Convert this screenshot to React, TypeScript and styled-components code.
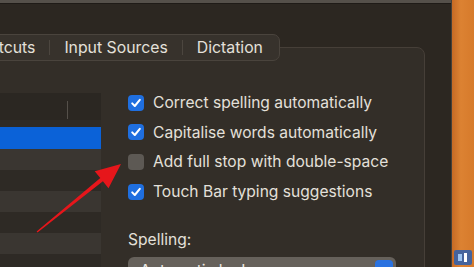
import styled, { createGlobalStyle } from "styled-components";

const GlobalStyle = createGlobalStyle`
  html, body {
    margin: 0;
    padding: 0;
    width: 474px;
    height: 267px;
    overflow: hidden;
    background: #2c2721;
    font-family: Inter, "Noto Sans", "Liberation Sans", sans-serif;
  }
`;

const Screen = styled.div`
  position: relative;
  display: flex;
  width: 474px;
  height: 267px;
  overflow: hidden;
`;

const Window = styled.div`
  width: 451px;
  height: 267px;
  display: flex;
  flex-direction: column;
  background: #2c2721;
  border-right: 1px solid #45403a;
  overflow: hidden;
`;

const TitleStrip = styled.div`
  height: 3px;
  flex-shrink: 0;
  background: #55504a;
  border-bottom: 1px solid #1f1b17;
`;

const Content = styled.div`
  padding-top: 30px;
  display: flex;
  flex-direction: column;
`;

const Tabs = styled.div`
  position: relative;
  z-index: 1;
  align-self: flex-start;
  display: flex;
  align-items: center;
  height: 27px;
  margin-left: -51.5px;
  margin-bottom: -14px;
  background: #37322c;
  border: 1px solid #4a443d;
  border-radius: 7px;
  box-sizing: border-box;
`;

const Tab = styled.div`
  padding: 0 14px;
  font-size: 15.8px;
  color: #e4e0da;
  margin-top: -1px;
  &:last-child {
    padding-right: 16px;
  }
`;

const TabSep = styled.div`
  width: 1px;
  height: 15px;
  background: #4c463f;
`;

const Panel = styled.div`
  margin-left: -20px;
  width: 445px;
  height: 240px;
  box-sizing: border-box;
  background: #332e28;
  border: 1px solid #463f38;
  border-radius: 8px;
  display: flex;
  padding-top: 45px;
`;

const List = styled.div`
  margin-left: 19px;
  width: 101px;
  display: flex;
  flex-direction: column;
  background: #2f2b26;
`;

const ListHeader = styled.div`
  height: 27px;
  display: flex;
  align-items: center;
  justify-content: flex-end;
  padding-right: 33px;
  background: #2b2722;
  margin-bottom: 7px;
`;

const HeaderSep = styled.div`
  width: 1px;
  height: 18px;
  margin-top: 6px;
  background: #55504a;
`;

const ListRow = styled.div<{ $tone: "sel" | "light" | "dark" }>`
  height: ${(p) => (p.$tone === "sel" ? 22 : 21)}px;
  background: ${(p) =>
    p.$tone === "sel" ? "#0b62d8" : p.$tone === "light" ? "#3a3631" : "#2e2a25"};
`;

const Options = styled.div`
  padding-left: 27px;
  display: flex;
  flex-direction: column;
`;

const CheckRow = styled.div`
  height: 29.6px;
  display: flex;
  align-items: center;
  gap: 9px;
  margin-top: -5px;
  & + & {
    margin-top: 0;
  }
  font-size: 15.6px;
  color: #e4e0da;
`;

const Box = styled.div<{ $on: boolean }>`
  width: 16px;
  height: 16px;
  border-radius: 4px;
  flex-shrink: 0;
  background: ${(p) => (p.$on ? "#1f6fe0" : "#5d5954")};
  display: flex;
  align-items: center;
  justify-content: center;
`;

const Label = styled.div`
  margin-top: 24px;
  font-size: 15.6px;
  color: #e4e0da;
`;

const Select = styled.div`
  margin-top: 8px;
  width: 268px;
  height: 27px;
  border-radius: 6px;
  background: #66615b;
  display: flex;
  align-items: center;
  justify-content: space-between;
  padding: 0 3px 0 12px;
  box-sizing: border-box;
  font-size: 15.6px;
  color: #ece8e2;
`;

const Stepper = styled.div`
  width: 18px;
  height: 21px;
  border-radius: 4px;
  background: #2a72e0;
`;

const Desktop = styled.div`
  flex: 1;
  height: 267px;
  background: linear-gradient(90deg, #c66a25 0%, #dc8232 40%, #d67a2b 100%);
  display: flex;
  align-items: flex-end;
  justify-content: center;
  padding-bottom: 2px;
  box-sizing: border-box;
`;

const Overlay = styled.svg`
  position: absolute;
  left: 0;
  top: 0;
  pointer-events: none;
`;

function Check() {
  return (
    <svg width="12" height="12" viewBox="0 0 12 12">
      <path d="M2.2 6.4 L4.8 9 L9.8 2.8" fill="none" stroke="#fff" strokeWidth="2" strokeLinecap="round" strokeLinejoin="round" />
    </svg>
  );
}

const options = [
  { text: "Correct spelling automatically", on: true },
  { text: "Capitalise words automatically", on: true },
  { text: "Add full stop with double-space", on: false },
  { text: "Touch Bar typing suggestions", on: true },
];

const rows: ("light" | "dark")[] = ["light", "dark", "light", "dark", "light", "dark"];

export default function App() {
  return (
    <>
      <GlobalStyle />
      <Screen>
        <Window>
          <TitleStrip />
          <Content>
            <Tabs>
              <Tab>Shortcuts</Tab>
              <TabSep />
              <Tab>Input Sources</Tab>
              <TabSep />
              <Tab>Dictation</Tab>
            </Tabs>
            <Panel>
              <List>
                <ListHeader>
                  <HeaderSep />
                </ListHeader>
                <ListRow $tone="sel" />
                {rows.map((t, i) => (
                  <ListRow key={i} $tone={t} />
                ))}
              </List>
              <Options>
                {options.map((o) => (
                  <CheckRow key={o.text}>
                    <Box $on={o.on}>{o.on && <Check />}</Box>
                    {o.text}
                  </CheckRow>
                ))}
                <Label>Spelling:</Label>
                <Select>
                  Automatic by Language
                  <Stepper />
                </Select>
              </Options>
            </Panel>
          </Content>
        </Window>
        <Desktop>
          <svg width="18" height="15" viewBox="0 0 18 15">
            <rect x="0" y="0" width="18" height="15" rx="2" fill="#2c5fb0" opacity="0.85" />
            <path d="M4 4 H8 V11 H4 Z" fill="#9cc3f0" />
            <path d="M10 3 H13 V12 H10 Z" fill="#ffffff" />
          </svg>
        </Desktop>
        <Overlay width="474" height="267" viewBox="0 0 474 267">
          <polygon
            points="36.6,231.4 100.3,178.1 94.7,171.2 121,164 108.5,188.2 102.9,181.3 37.5,232.6"
            fill="#e6161b"
          />
        </Overlay>
      </Screen>
    </>
  );
}
